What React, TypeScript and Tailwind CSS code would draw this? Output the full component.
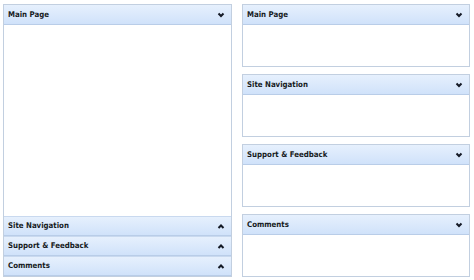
import React from "react";

function Chevron({ up }: { up?: boolean }) {
  return (
    <svg width="8" height="6" viewBox="0 0 8 6" className="shrink-0">
      <polyline
        points={up ? "1.5,5 4,2.5 6.5,5" : "1.5,1.5 4,4 6.5,1.5"}
        fill="none"
        stroke="#141a26"
        strokeWidth="2"
      />
    </svg>
  );
}

function Header({ title, up, first }: { title: string; up?: boolean; first?: boolean }) {
  return (
    <div
      className={`h-[20px] shrink-0 flex items-center justify-between pl-[4px] pr-[6px] bg-gradient-to-b from-[#e6f0fd] to-[#d0e2fa] border-b border-[#b9cde8] ${
        first ? "" : "border-t border-t-[#c9d9ef]"
      }`}
    >
      <span className="text-[7.8px] font-bold text-[#161a22] leading-none">{title}</span>
      <Chevron up={up} />
    </div>
  );
}

function Panel({ title }: { title: string }) {
  return (
    <div className="h-[63px] flex flex-col border border-[#c2cfe0] bg-white">
      <Header title={title} first />
      <div className="flex-1" />
    </div>
  );
}

export default function App() {
  return (
    <div
      className="w-[474px] h-[280px] bg-white flex gap-[10px] pl-[3px] pr-[4px] pt-[4px] pb-[3px]"
      style={{ fontFamily: '"DejaVu Sans Condensed", "DejaVu Sans", sans-serif' }}
    >
      <div className="w-[229px] flex flex-col border border-[#c2cfe0] bg-white">
        <Header title="Main Page" first />
        <div className="flex-1" />
        <Header title="Site Navigation" up />
        <Header title="Support & Feedback" up />
        <Header title="Comments" up />
      </div>
      <div className="flex-1 flex flex-col gap-[7px]">
        <Panel title="Main Page" />
        <Panel title="Site Navigation" />
        <Panel title="Support & Feedback" />
        <Panel title="Comments" />
      </div>
    </div>
  );
}
